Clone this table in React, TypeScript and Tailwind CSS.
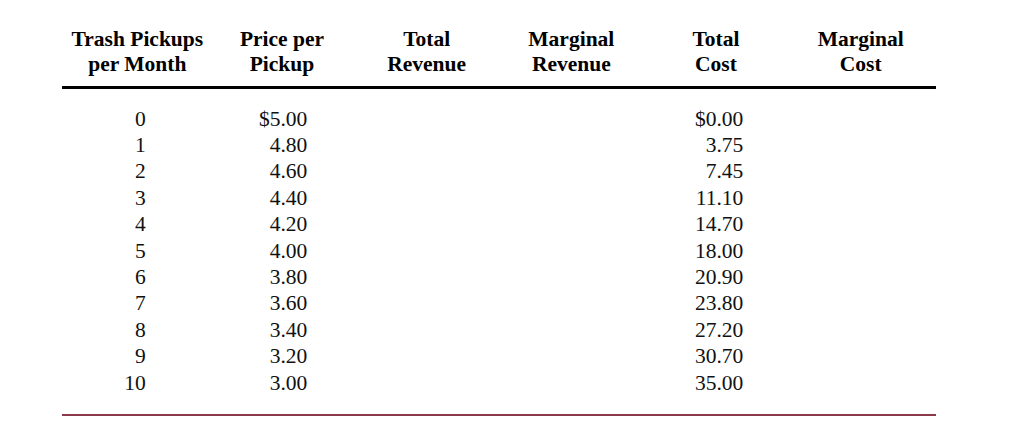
import React from 'react';

const headers = [
  ['Trash Pickups', 'per Month'],
  ['Price per', 'Pickup'],
  ['Total', 'Revenue'],
  ['Marginal', 'Revenue'],
  ['Total', 'Cost'],
  ['Marginal', 'Cost'],
];

const rows: [string, string, string][] = [
  ['0', '$5.00', '$0.00'],
  ['1', '4.80', '3.75'],
  ['2', '4.60', '7.45'],
  ['3', '4.40', '11.10'],
  ['4', '4.20', '14.70'],
  ['5', '4.00', '18.00'],
  ['6', '3.80', '20.90'],
  ['7', '3.60', '23.80'],
  ['8', '3.40', '27.20'],
  ['9', '3.20', '30.70'],
  ['10', '3.00', '35.00'],
];

export default function App() {
  return (
    <div className="w-[1024px] h-[441px] bg-white overflow-hidden font-['Liberation_Serif',serif] text-black">
      <div className="ml-[62px] w-[874px] pt-[27px]">
        <div className="grid grid-cols-6 px-[3px] pb-[10px] border-b-[3px] border-black">
          {headers.map((h, i) => (
            <div key={i} className="text-center font-bold text-[21.5px] leading-[24.5px]">
              <div>{h[0]}</div>
              <div>{h[1]}</div>
            </div>
          ))}
        </div>
        <div className="pt-[16.5px] pb-[18px] border-b-2 border-[#8b3a4c] px-[3px]">
          {rows.map(([q, p, tc]) => (
            <div key={q} className="grid grid-cols-6 text-[21.5px] leading-[26.4px] text-[#111]">
              <div className="text-right pr-[64px]">{q}</div>
              <div className="text-right pr-[47px]">{p}</div>
              <div />
              <div />
              <div className="text-right pr-[45px]">{tc}</div>
              <div />
            </div>
          ))}
        </div>
      </div>
    </div>
  );
}
